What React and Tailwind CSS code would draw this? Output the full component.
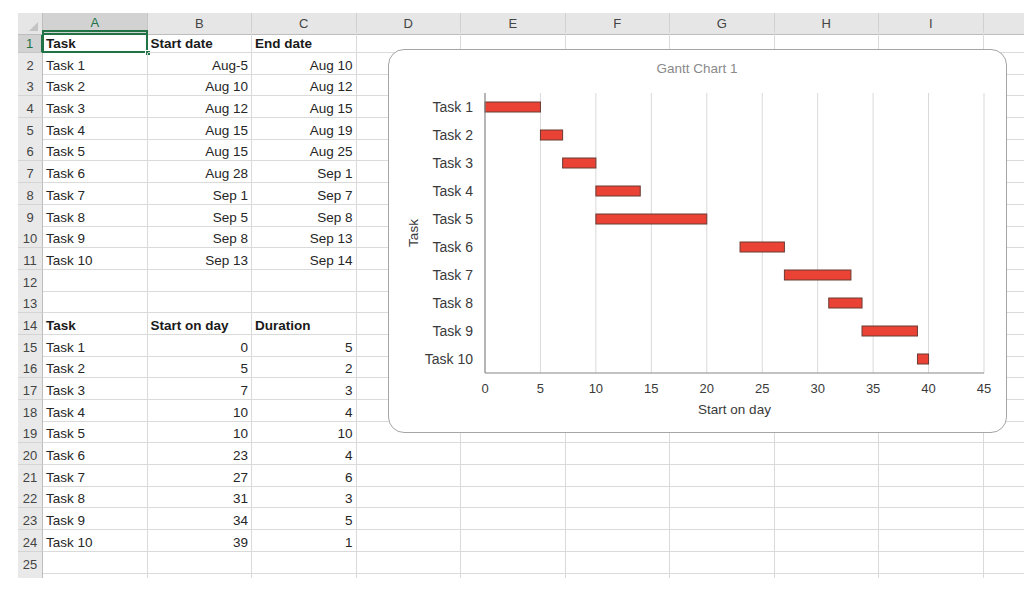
import React from 'react';

const letters = ['A', 'B', 'C', 'D', 'E', 'F', 'G', 'H', 'I', ''];

// sheet contents, rows 1..26 (A, B, C)
const rows = [
  { cells: ['Task', 'Start date', 'End date'], bold: true },
  { cells: ['Task 1', 'Aug-5', 'Aug 10'] },
  { cells: ['Task 2', 'Aug 10', 'Aug 12'] },
  { cells: ['Task 3', 'Aug 12', 'Aug 15'] },
  { cells: ['Task 4', 'Aug 15', 'Aug 19'] },
  { cells: ['Task 5', 'Aug 15', 'Aug 25'] },
  { cells: ['Task 6', 'Aug 28', 'Sep 1'] },
  { cells: ['Task 7', 'Sep 1', 'Sep 7'] },
  { cells: ['Task 8', 'Sep 5', 'Sep 8'] },
  { cells: ['Task 9', 'Sep 8', 'Sep 13'] },
  { cells: ['Task 10', 'Sep 13', 'Sep 14'] },
  { cells: ['', '', ''] },
  { cells: ['', '', ''] },
  { cells: ['Task', 'Start on day', 'Duration'], bold: true },
  { cells: ['Task 1', '0', '5'] },
  { cells: ['Task 2', '5', '2'] },
  { cells: ['Task 3', '7', '3'] },
  { cells: ['Task 4', '10', '4'] },
  { cells: ['Task 5', '10', '10'] },
  { cells: ['Task 6', '23', '4'] },
  { cells: ['Task 7', '27', '6'] },
  { cells: ['Task 8', '31', '3'] },
  { cells: ['Task 9', '34', '5'] },
  { cells: ['Task 10', '39', '1'] },
  { cells: ['', '', ''] },
  { cells: ['', '', ''], hideNum: true }, // only a sliver of row 26 shows
];

const tasks = [
  [0, 5], [5, 2], [7, 3], [10, 4], [10, 10],
  [23, 4], [27, 6], [31, 3], [34, 5], [39, 1],
];

const GanttChart = () => {
  const x0 = 96;
  const unit = 499 / 45;
  const top = 43;
  const bottom = 323;
  const band = 28;
  const ticks = [0, 5, 10, 15, 20, 25, 30, 35, 40, 45];

  return (
    <svg width="619" height="384" className="block" fontFamily="'Liberation Sans', Arial, sans-serif">
      <text x="308" y="23" textAnchor="middle" fontSize="13.5" fill="#8a8a8a">Gantt Chart 1</text>

      {ticks.slice(1).map((t) => (
        <line key={t} x1={x0 + t * unit} y1={top} x2={x0 + t * unit} y2={bottom} stroke="#d9d9d9" strokeWidth="1" />
      ))}

      {tasks.map(([s, d], i) => {
        const cy = top + band / 2 + band * i;
        return (
          <g key={i}>
            <text x="84" y={cy + 5} textAnchor="end" fontSize="14" fill="#3a3a3a">Task {i + 1}</text>
            <rect x={x0 + s * unit} y={cy - 5} width={d * unit} height="10" fill="#ea4335" stroke="#6b3a33" strokeWidth="1" />
          </g>
        );
      })}

      <line x1={x0} y1={top} x2={x0} y2={bottom} stroke="#858585" strokeWidth="1.2" />
      <line x1={x0} y1={bottom} x2={x0 + 45 * unit} y2={bottom} stroke="#858585" strokeWidth="1.2" />

      {ticks.map((t) => (
        <text key={t} x={x0 + t * unit} y="343" textAnchor="middle" fontSize="13" fill="#3a3a3a">{t}</text>
      ))}

      <text x="345.5" y="364" textAnchor="middle" fontSize="13.5" fill="#3a3a3a">Start on day</text>
      <text x="0" y="0" transform="translate(28.5 183) rotate(-90)" textAnchor="middle" fontSize="13.5" fill="#3a3a3a">Task</text>
    </svg>
  );
};

const App = () => {
  return (
    <div className="relative w-[1024px] h-[615px] overflow-hidden bg-white font-['Liberation_Sans',Arial,sans-serif] text-[13.5px] text-[#262626]">
      <div className="pt-[13px] pl-[18px]">
        <div className="h-[565px] overflow-hidden">
          {/* column headers */}
          <div className="grid grid-cols-[25px_repeat(10,104.5px)] h-[18px] text-[13px]">
            <div className="relative bg-[#e6e6e6] border-r border-b border-[#bdbdbd]">
              <div className="absolute right-[4px] bottom-[3px] w-0 h-0 border-l-[9px] border-l-transparent border-b-[9px] border-b-[#c4c4c4]" />
            </div>
            {letters.map((l, i) => (
              <div
                key={i}
                className={
                  i === 0
                    ? 'flex items-center justify-center bg-[#d2d2d2] border-r border-b-2 border-r-[#c6c6c6] border-b-[#217346] text-[#217346]'
                    : 'flex items-center justify-center bg-[#e6e6e6] border-r border-b border-r-[#d0d0d0] border-b-[#bdbdbd] text-[#444444]'
                }
              >
                {l}
              </div>
            ))}
          </div>

          {/* sheet rows */}
          {rows.map((row, r) => (
            <div key={r} className="grid grid-cols-[25px_repeat(10,104.5px)] h-[21.7px] leading-[16px]">
              <div
                className={
                  r === 0
                    ? 'flex items-center justify-center pt-[5px] bg-[#d2d2d2] border-r-2 border-b border-r-[#217346] border-b-[#c6c6c6] text-[#217346] text-[13px]'
                    : 'flex items-center justify-center pt-[5px] bg-[#e9e9e9] border-r border-b border-r-[#bdbdbd] border-b-[#d4d4d4] text-[#444444] text-[13px]'
                }
              >
                {row.hideNum ? '' : r + 1}
              </div>
              {letters.map((l, c) => {
                const v = c < 3 ? row.cells[c] : '';
                const align = c === 0 || row.bold ? 'justify-start' : 'justify-end';
                return (
                  <div
                    key={c}
                    className={`relative flex items-center pt-[5px] px-[3px] whitespace-nowrap border-r border-b border-[#dadada] ${align} ${row.bold ? 'font-bold text-[#1a1a1a]' : ''}`}
                  >
                    {v}
                    {r === 0 && c === 0 && (
                      <>
                        <div className="absolute -left-px -top-px right-[-1px] bottom-[-1px] border-2 border-[#217346]" />
                        <div className="absolute right-[-4px] bottom-[-4px] w-[6px] h-[6px] bg-[#217346] border border-white" />
                      </>
                    )}
                  </div>
                );
              })}
            </div>
          ))}
        </div>
      </div>

      {/* chart floats over the sheet */}
      <div className="absolute left-[388px] top-[49px] w-[619px] h-[384px] rounded-[16px] border border-[#a6a6a6] bg-white overflow-hidden">
        <GanttChart />
      </div>
    </div>
  );
};

export default App;
